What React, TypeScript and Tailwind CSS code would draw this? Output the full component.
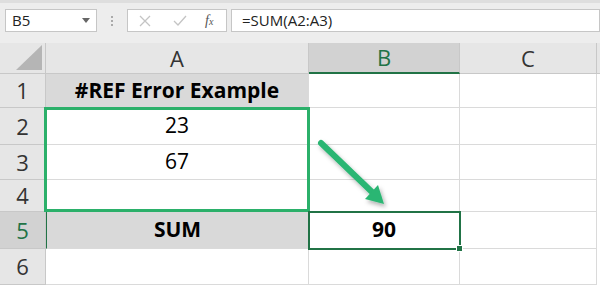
import { ReactNode } from "react";

const font = { fontFamily: '"Open Sans", "Noto Sans", Arial, sans-serif' };

function Cell({ className, children }: { className?: string; children?: ReactNode }) {
  return <div className={"flex items-center justify-center border-r border-b border-[#dadada] " + (className || "")}>{children}</div>;
}

function RowHead({ n, active }: { n: number; active?: boolean }) {
  return (
    <div
      className={
        "flex items-center justify-center border-r border-b border-[#c8c8c8] text-[22px] " +
        (active ? "bg-[#d2d2d2] text-[#217346]" : "bg-[#e6e6e6] text-[#333]")
      }
    >
      {n}
    </div>
  );
}

function App() {
  return (
    <div className="w-[600px] h-[286px] overflow-hidden bg-white" style={font}>
      {/* formula bar */}
      <div className="h-[43px] flex items-start pt-[6px] bg-[#ededed] border-t-[3px] border-[#dedede]">
        <div className="ml-[5px] w-[92px] h-[23px] bg-white border border-[#c6c6c6] flex items-center justify-between pl-[6px] pr-[6px]">
          <span className="text-[15px] text-[#222]">B5</span>
          <svg width="8" height="5" viewBox="0 0 8 5">
            <path d="M0 0 L8 0 L4 5 Z" fill="#666" />
          </svg>
        </div>
        <div className="w-[30px] h-[23px] flex flex-col items-center justify-center gap-[2px]">
          <span className="w-[2px] h-[2px] bg-[#aaa]" />
          <span className="w-[2px] h-[2px] bg-[#aaa]" />
          <span className="w-[2px] h-[2px] bg-[#aaa]" />
        </div>
        <div className="w-[100px] h-[23px] bg-white border border-[#c6c6c6] flex items-center">
          <svg className="ml-[11px]" width="12" height="12" viewBox="0 0 12 12">
            <path d="M1 1 L11 11 M11 1 L1 11" stroke="#c4c4c4" strokeWidth="1.3" />
          </svg>
          <svg className="ml-[22px]" width="14" height="12" viewBox="0 0 14 12">
            <path d="M1 6 L5 10 L13 1" stroke="#c4c4c4" strokeWidth="1.3" fill="none" />
          </svg>
          <span className="ml-[18px] text-[14px] italic text-[#555]" style={{ fontFamily: '"Liberation Serif", serif' }}>
            f<span className="text-[10px]">x</span>
          </span>
        </div>
        <div className="ml-[4px] flex-1 h-[23px] bg-white border border-[#c6c6c6] flex items-center pl-[10px]">
          <span className="text-[15px] text-[#222]">=SUM(A2:A3)</span>
        </div>
      </div>

      {/* grid */}
      <div className="relative">
        <div className="grid grid-cols-[46px_263px_151px_137px_3px] grid-rows-[31px_34px_37px_35px_32px_37px_36px]">
          {/* header row */}
          <div className="relative bg-[#e6e6e6] border-r border-b border-[#c8c8c8]">
            <svg className="absolute right-[3px] bottom-[3px]" width="26" height="25" viewBox="0 0 26 25">
              <path d="M26 0 L26 25 L0 25 Z" fill="#b5b5b5" />
            </svg>
          </div>
          <div className="flex items-center justify-center bg-[#e6e6e6] border-r border-b border-[#c8c8c8] text-[22px] text-[#333]">A</div>
          <div className="flex items-center justify-center bg-[#d2d2d2] border-r border-[#c8c8c8] border-b-2 border-b-[#217346] text-[22px] text-[#217346]">B</div>
          <div className="flex items-center justify-center bg-[#e6e6e6] border-r border-b border-[#c8c8c8] text-[22px] text-[#333]">C</div>
          <div className="bg-[#e6e6e6] border-b border-[#c8c8c8]" />

          {/* row 1 */}
          <RowHead n={1} />
          <Cell className="bg-[#d9d9d9] border-[#555] text-[21px] font-bold text-black">#REF Error Example</Cell>
          <Cell />
          <Cell />
          <div />

          {/* row 2 */}
          <RowHead n={2} />
          <Cell className="border-[#555] text-[21px] text-black">23</Cell>
          <Cell />
          <Cell />
          <div />

          {/* row 3 */}
          <RowHead n={3} />
          <Cell className="border-[#555] text-[21px] text-black">67</Cell>
          <Cell />
          <Cell />
          <div />

          {/* row 4 */}
          <RowHead n={4} />
          <Cell className="border-[#555]" />
          <Cell />
          <Cell />
          <div />

          {/* row 5 */}
          <RowHead n={5} active />
          <Cell className="bg-[#d9d9d9] border-[#555] border-l border-l-[#217346] text-[21px] font-bold text-black">SUM</Cell>
          <Cell className="text-[21px] font-bold text-black">90</Cell>
          <Cell />
          <div />

          {/* row 6 */}
          <RowHead n={6} />
          <Cell />
          <Cell />
          <Cell />
          <div />
        </div>

        {/* selection range A2:A4 */}
        <div className="absolute left-[44px] top-[64px] w-[266px] h-[105px] border-[3px] border-[#2bb06a] pointer-events-none" />
        {/* active cell B5 */}
        <div className="absolute left-[308px] top-[168px] w-[153px] h-[39px] border-2 border-[#217346] pointer-events-none">
          <span className="absolute -right-[4px] -bottom-[4px] w-[7px] h-[7px] bg-[#217346] border border-white" />
        </div>

        {/* arrow */}
        <svg className="absolute left-[310px] top-[92px] pointer-events-none" width="90" height="80" viewBox="0 0 90 80">
          <defs>
            <filter id="sh" x="-20%" y="-20%" width="150%" height="150%">
              <feDropShadow dx="2" dy="3" stdDeviation="2" floodColor="#000" floodOpacity="0.3" />
            </filter>
          </defs>
          <g filter="url(#sh)">
            <line x1="11" y1="8" x2="62" y2="57" stroke="#2bb673" strokeWidth="6" strokeLinecap="round" />
            <path d="M74 69 L55 64 L68 50 Z" fill="#2bb673" />
          </g>
        </svg>
      </div>
    </div>
  );
}

export default App;
